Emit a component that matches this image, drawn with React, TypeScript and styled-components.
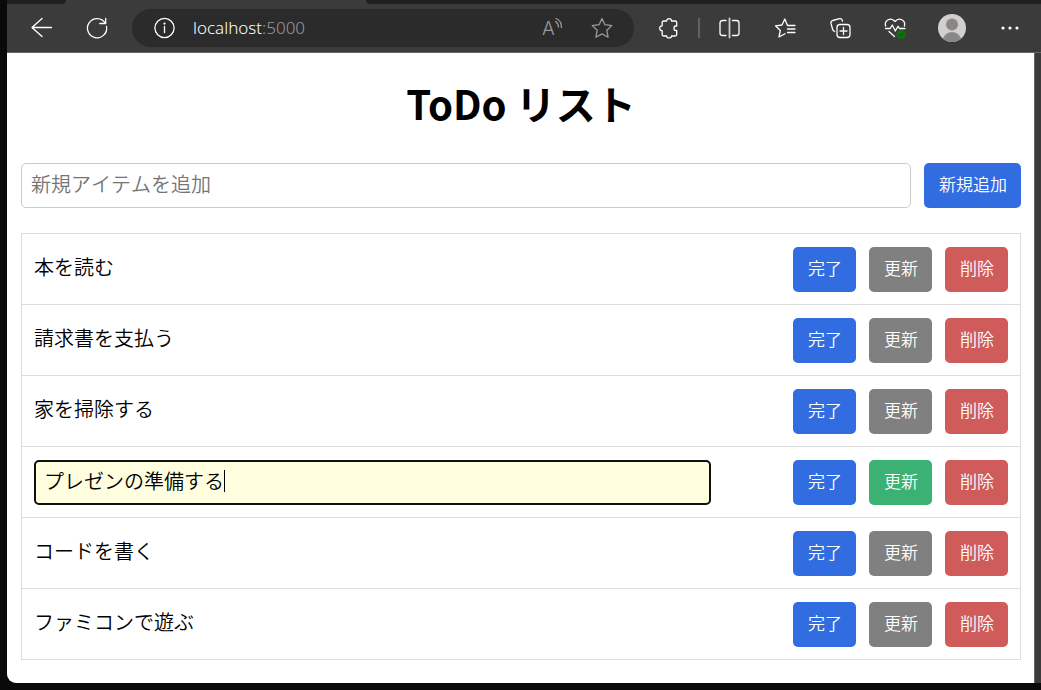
import React, { useState } from "react";
import styled, { createGlobalStyle } from "styled-components";

const GlobalStyle = createGlobalStyle`
  *, *::before, *::after { box-sizing: border-box; }
  body {
    margin: 0;
    background: #0a0a0a;
    font-family: "Noto Sans CJK JP", "Noto Sans", sans-serif;
    font-weight: 350;
    font-kerning: none;
    color: #000;
  }
  button, input { font-family: inherit; font-weight: inherit; font-kerning: inherit; margin: 0; }
`;

const BrowserWindow = styled.div`
  display: flex;
  flex-direction: column;
  min-height: 100vh;
  padding: 0 0 7px 7px;
`;

const TabStrip = styled.div`
  display: flex;
  height: 4px;
  background: #3b3b3b;
`;

const InactiveTab = styled.div<{ $side: "left" | "right" }>`
  background: #202020;
  ${(p) =>
    p.$side === "left"
      ? "width: 59px; border-bottom-right-radius: 4px;"
      : "flex: 1; margin-left: 300px; border-bottom-left-radius: 4px;"}
`;

const Toolbar = styled.header`
  display: flex;
  align-items: center;
  height: 49px;
  padding: 0 4px 0 7px;
  background: #3b3b3b;
  border-bottom: 1px solid #666;
`;

const ToolButton = styled.button<{ $wide?: boolean }>`
  display: flex;
  flex: none;
  align-items: center;
  justify-content: center;
  width: ${(p) => (p.$wide ? 60 : 55)}px;
  height: 36px;
  padding: 0;
  border: 0;
  background: none;
  color: #fff;
`;

const AddressBar = styled.div`
  display: flex;
  flex: 1;
  align-items: center;
  min-width: 0;
  height: 38px;
  margin: 0 7px 0 8px;
  padding: 0 20px 0 21px;
  border-radius: 19px;
  background: #2b2b2b;
`;

const AddressButton = styled.button<{ $bright?: boolean }>`
  display: flex;
  padding: 0;
  border: 0;
  background: none;
  color: ${(p) => (p.$bright ? "#fff" : "#9a9a9a")};
  & + & { margin-left: 26px; }
`;

const Address = styled.span`
  flex: 1;
  margin-left: 16px;
  padding-bottom: 1px;
  font-family: "Noto Sans", "Open Sans", sans-serif;
  font-size: 17px;
  font-weight: 350;
  line-height: 24px;
  color: #fff;
`;

const Port = styled.span`
  color: #999;
`;

const Divider = styled.span`
  width: 2px;
  height: 20px;
  margin: 0 2px;
  background: #626262;
`;

const Svg = styled.svg`
  display: block;
  width: 24px;
  height: 24px;
  fill: none;
  stroke: currentColor;
  stroke-width: 1.3;
  stroke-linecap: round;
  stroke-linejoin: round;
`;

const Avatar = styled.svg`
  display: block;
  width: 28px;
  height: 28px;
  border-radius: 50%;
`;

const Viewport = styled.div`
  display: flex;
  flex: 1;
  background: #3b3b3b;
  padding-right: 6px;
  border-bottom-left-radius: 9px;
`;

const Page = styled.main`
  flex: 1;
  min-width: 0;
  padding: 20px 13px 23px 14px;
  background: #fff;
  border-right: 1px solid #666;
  border-bottom-left-radius: 9px;
`;

const Title = styled.h1`
  margin: 0 0 30px;
  font-size: 40px;
  font-weight: 700;
  font-kerning: auto;
  line-height: 60px;
  text-align: center;
`;

const AddForm = styled.form`
  display: flex;
  gap: 13px;
  margin-bottom: 25px;
`;

const TextField = styled.input<{ $editing?: boolean }>`
  flex: 1;
  min-width: 0;
  height: 45px;
  padding: 0 9px 5px;
  border: 1px solid #ccc;
  border-radius: 5px;
  outline: none;
  background: #fff;
  color: #000;
  font-size: 20px;
  &::placeholder { color: #757575; opacity: 1; }
  ${(p) =>
    p.$editing &&
    `
    padding: 0 8px 5px;
    border: 2px solid #101010;
    background: #ffffe0;
    caret-color: transparent;
  `}
`;

const EditBox = styled.div`
  position: relative;
  display: flex;
  flex: 1;
  min-width: 0;
`;

const Caret = styled.span`
  position: absolute;
  top: 10px;
  width: 1px;
  height: 22px;
  background: #000;
  pointer-events: none;
`;

const tones = {
  blue: "#316de1",
  gray: "#808080",
  green: "#3bb174",
  red: "#cf5b5b",
};

const ActionButton = styled.button<{ $tone: keyof typeof tones }>`
  flex: none;
  height: 45px;
  padding: 0 14px 4px 15px;
  border: 0;
  border-radius: 5px;
  background: ${(p) => tones[p.$tone]};
  color: #fff;
  font-size: 17px;
  line-height: 24px;
  white-space: nowrap;
`;

const List = styled.ul`
  margin: 0;
  padding: 0;
  list-style: none;
  border: 1px solid #ddd;
`;

const Row = styled.li`
  display: flex;
  align-items: center;
  padding: 13px 12px 12px;
  & + & { border-top: 1px solid #ddd; }
`;

const ItemText = styled.span`
  flex: 1;
  padding-bottom: 6px;
  font-size: 20px;
  line-height: 30px;
`;

const Actions = styled.div`
  display: flex;
  gap: 13px;
  margin-left: 82px;
`;

const BackIcon = () => (
  <Svg viewBox="0 0 24 24">
    <path d="M21.5 11.5H2M12 2.5l-10 9 10 9" />
  </Svg>
);

const ReloadIcon = () => (
  <Svg viewBox="0 0 24 24">
    <path d="M21.5 10.5A9.6 9.6 0 1 1 20.300 7.3M20.7 2.5v5H14.8" />
  </Svg>
);

const InfoIcon = () => (
  <Svg viewBox="0 0 24 24">
    <circle cx="11.5" cy="12" r="9.6" />
    <path d="M11.5 10.5v6" />
    <circle cx="11.5" cy="7.6" r=".5" fill="currentColor" />
  </Svg>
);

const ReadAloudIcon = () => (
  <Svg viewBox="0 0 24 24">
    <text x="2" y="19" fontSize="19" fontFamily="Inter, sans-serif" fontWeight="300" fill="currentColor" stroke="none">
      A
    </text>
    <path d="M15.5 5.5c2 1.2 3 3 3 5.5M16 2.5c3.800 1.500 5.500 4.500 5.500 9" />
  </Svg>
);

const StarIcon = () => (
  <Svg viewBox="0 0 24 24">
    <path d="M12 2.500l2.900 6.200 6.900.9-5 4.700 1.300 6.900-6.100-3.300-6.100 3.300 1.300-6.900-5-4.700 6.900-.9z" />
  </Svg>
);

const ExtensionsIcon = () => (
  <Svg viewBox="0 0 24 24">
    <path d="M6.700 5H9.700c-.3-3.200 5.100-3.200 4.800 0h3.700q1.500 0 1.500 1.500V10h-1c-2.300 0-2.300 4.500 0 4.500h1V18.500q0 1.500-1.500 1.500h-3.700c.3 2.600-5.100 2.600-4.800 0H6.700Q5.200 20 5.200 18.500v-3.800c-3.300.3-3.300-5.200 0-4.900V6.500Q5.200 5 6.700 5z" />
  </Svg>
);

const SplitIcon = () => (
  <Svg viewBox="0 0 24 24">
    <path d="M8 4.500H4.500Q2 4.500 2 7v10q0 2.500 2.500 2.500H8M14.500 4.500h4Q21 4.500 21 7v10q0 2.500-2.500 2.500h-4" />
    <path d="M11.500 2.500v19" stroke="#ccc" strokeWidth="1.800" />
  </Svg>
);

const FavoritesIcon = () => (
  <Svg viewBox="0 0 24 24">
    <path d="M22 9.500h-7.500L11.800 3 9 9l-6.500.8 4.800 4.700L6 21l6-3.200M14.500 13H22M14.500 16.500H22" />
  </Svg>
);

const CollectionsIcon = () => (
  <Svg viewBox="0 0 24 24">
    <path d="M6.600 15.500C5.300 15 4.700 14 4.500 13L3 7.400C2.700 6 3.300 4.900 4.600 4.500l7-1.900c1.500-.3 2.500.4 2.900 2.400" />
    <rect x="9" y="8.500" width="13" height="13" rx="3" />
    <path d="M15.500 11.500v7M12 15h7" />
  </Svg>
);

const EssentialsIcon = () => (
  <Svg viewBox="0 0 24 24">
    <path d="M2.600 10C1 4 8 .8 12 5.500 16 .8 23 4 21.400 10M2.500 12.500h4.700L9.300 9l3 6 2.700-4.800 1.500 2.300h5.500M6 15.500l5.500 5" />
    <circle cx="18" cy="18.500" r="4.500" fill="#0f7010" stroke="none" />
    <path d="M16 18.500l1.500 1.500 2.700-3" stroke="#2b3b2b" strokeWidth="1" />
  </Svg>
);

const MoreIcon = () => (
  <Svg viewBox="0 0 24 24">
    <g fill="currentColor" stroke="none">
      <circle cx="5" cy="12" r="1.600" />
      <circle cx="12" cy="12" r="1.600" />
      <circle cx="19" cy="12" r="1.600" />
    </g>
  </Svg>
);

const initialItems = [
  "本を読む",
  "請求書を支払う",
  "家を掃除する",
  "プレゼンの準備する",
  "コードを書く",
  "ファミコンで遊ぶ",
];

export default function App() {
  const [items, setItems] = useState(initialItems);
  const [editing, setEditing] = useState(3);
  const [draft, setDraft] = useState("");

  const addItem = (e: React.FormEvent) => {
    e.preventDefault();
    if (draft.trim()) {
      setItems([...items, draft.trim()]);
      setDraft("");
    }
  };

  const removeItem = (index: number) => {
    setItems(items.filter((_, i) => i !== index));
    setEditing(-1);
  };

  return (
    <>
      <GlobalStyle />
      <BrowserWindow>
        <TabStrip>
          <InactiveTab $side="left" />
          <InactiveTab $side="right" />
        </TabStrip>
        <Toolbar>
          <ToolButton aria-label="戻る"><BackIcon /></ToolButton>
          <ToolButton aria-label="更新"><ReloadIcon /></ToolButton>
          <AddressBar>
            <AddressButton $bright aria-label="サイト情報"><InfoIcon /></AddressButton>
            <Address>localhost<Port>:5000</Port></Address>
            <AddressButton aria-label="音声で読み上げる"><ReadAloudIcon /></AddressButton>
            <AddressButton aria-label="お気に入りに追加"><StarIcon /></AddressButton>
          </AddressBar>
          <ToolButton aria-label="拡張機能"><ExtensionsIcon /></ToolButton>
          <Divider />
          <ToolButton aria-label="画面を分割"><SplitIcon /></ToolButton>
          <ToolButton aria-label="お気に入り"><FavoritesIcon /></ToolButton>
          <ToolButton aria-label="コレクション"><CollectionsIcon /></ToolButton>
          <ToolButton aria-label="ブラウザーのエッセンシャル"><EssentialsIcon /></ToolButton>
          <ToolButton $wide aria-label="プロファイル">
            <Avatar viewBox="0 0 28 28">
              <rect width="28" height="28" fill="#d2d0ce" />
              <circle cx="14" cy="10.500" r="6" fill="#8a8886" />
              <circle cx="14" cy="27.500" r="9.500" fill="#8a8886" />
            </Avatar>
          </ToolButton>
          <ToolButton aria-label="設定など"><MoreIcon /></ToolButton>
        </Toolbar>
        <Viewport>
          <Page>
            <Title>ToDo リスト</Title>
            <AddForm onSubmit={addItem}>
              <TextField
                type="text"
                aria-label="新規アイテム"
                placeholder="新規アイテムを追加"
                value={draft}
                onChange={(e) => setDraft(e.target.value)}
              />
              <ActionButton $tone="blue" type="submit">新規追加</ActionButton>
            </AddForm>
            <List>
              {items.map((item, index) => (
                <Row key={index}>
                  {index === editing ? (
                    <EditBox>
                      <TextField
                        $editing
                        autoFocus
                        type="text"
                        aria-label="アイテムを編集"
                        value={item}
                        onFocus={(e) => e.target.setSelectionRange(item.length, item.length)}
                        onChange={(e) => setItems(items.map((t, i) => (i === index ? e.target.value : t)))}
                      />
                      <Caret style={{ left: 10 + item.length * 20 }} />
                    </EditBox>
                  ) : (
                    <ItemText>{item}</ItemText>
                  )}
                  <Actions>
                    <ActionButton $tone="blue" type="button" onClick={() => removeItem(index)}>完了</ActionButton>
                    <ActionButton
                      $tone={index === editing ? "green" : "gray"}
                      type="button"
                      onClick={() => setEditing(index === editing ? -1 : index)}
                    >
                      更新
                    </ActionButton>
                    <ActionButton $tone="red" type="button" onClick={() => removeItem(index)}>削除</ActionButton>
                  </Actions>
                </Row>
              ))}
            </List>
          </Page>
        </Viewport>
      </BrowserWindow>
    </>
  );
}
